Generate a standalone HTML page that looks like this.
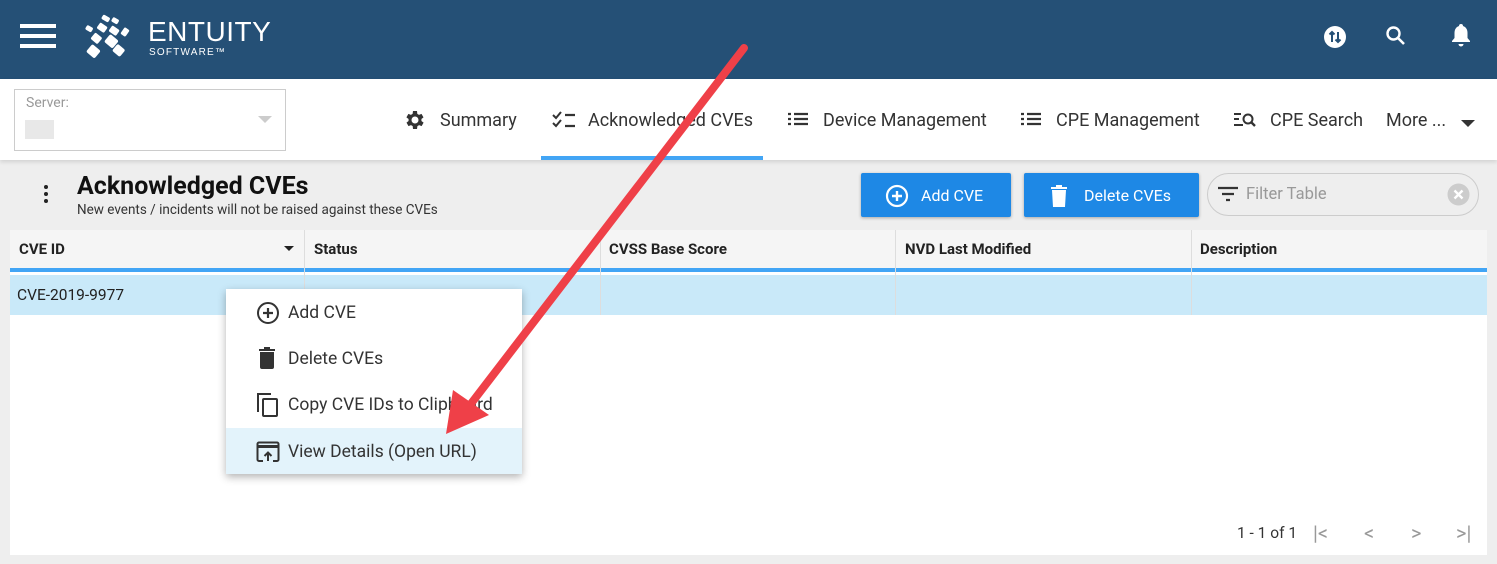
<!DOCTYPE html>
<html><head><style>
*{margin:0;padding:0;box-sizing:border-box}
body{width:1497px;height:564px;overflow:hidden;background:#eeeeee;font-family:"Roboto","Liberation Sans",sans-serif;position:relative;color:#222}
.abs{position:absolute}
.hdr{left:0;top:0;width:1497px;height:79px;background:#255076}
.nav{left:0;top:79px;width:1497px;height:81px;background:#fff;box-shadow:0 2px 4px rgba(0,0,0,.12)}
.tab{position:absolute;top:110px;font-size:18px;color:#333;white-space:nowrap}
.btn{position:absolute;top:173px;height:44px;background:#1e88e5;color:#fff;font-size:16px;border-radius:2px;box-shadow:0 1px 3px rgba(0,0,0,.3)}
.th{position:absolute;top:240px;font-size:15px;font-weight:bold;color:#222}
.mi{position:absolute;left:288px;font-size:17.5px;color:#333}
</style></head><body>
<div class="abs hdr"></div>
<div class="abs" style="left:20px;top:24px;width:36px;height:4px;background:#fff"></div>
<div class="abs" style="left:20px;top:34px;width:36px;height:4px;background:#fff"></div>
<div class="abs" style="left:20px;top:44px;width:36px;height:4px;background:#fff"></div>
<svg class="abs" style="left:82px;top:14px" width="56" height="46" viewBox="0 0 56 46" fill="#fff">
<rect x="20" y="2" width="8" height="5" rx="1.5" transform="rotate(30 24 4)"/>
<rect x="30" y="4" width="7" height="5" rx="1.5" transform="rotate(30 33 6)"/>
<rect x="4" y="12" width="7" height="5" rx="1.5" transform="rotate(30 7 14)"/>
<rect x="16" y="10" width="9" height="7" rx="1.5" transform="rotate(35 20 13)"/>
<rect x="28" y="13" width="9" height="7" rx="1.5" transform="rotate(35 32 16)"/>
<rect x="40" y="14" width="6" height="8" rx="1.5" transform="rotate(35 43 18)"/>
<rect x="10" y="20" width="9" height="8" rx="1.5" transform="rotate(40 14 24)"/>
<rect x="24" y="22" width="11" height="10" rx="2" transform="rotate(40 29 27)"/>
<rect x="6" y="32" width="11" height="10" rx="2" transform="rotate(40 11 37)"/>
<rect x="32" y="32" width="10" height="9" rx="2" transform="rotate(40 37 36)"/>
</svg>
<div class="abs" style="left:148px;top:16px;color:#fff;font-size:28px;letter-spacing:0.5px;font-family:'Liberation Sans',sans-serif">ENTUITY</div>
<div class="abs" style="left:149px;top:47px;color:#fff;font-size:10px;letter-spacing:1.2px;font-family:'Liberation Sans',sans-serif">SOFTWARE™</div>
<svg class="abs" style="left:1323px;top:25px" width="24" height="24" viewBox="0 0 24 24"><circle cx="12" cy="12" r="11" fill="#fff"/><path d="M9 17V7M6.5 9.5L9 7l2.5 2.5M15 7v10M12.5 14.5L15 17l2.5-2.5" stroke="#255076" stroke-width="2" fill="none"/></svg>
<svg class="abs" style="left:1384px;top:24px" width="24" height="24" viewBox="0 0 24 24"><circle cx="9.5" cy="9.5" r="6" stroke="#fff" stroke-width="2.4" fill="none"/><path d="M14 14l6 6" stroke="#fff" stroke-width="2.6"/></svg>
<svg class="abs" style="left:1449px;top:22px" width="24" height="26" viewBox="0 0 24 26"><path d="M12 2a2 2 0 0 1 2 2c3 1 4.5 3.5 4.5 7v5l2.5 3v1H3v-1l2.5-3v-5c0-3.5 1.5-6 4.5-7a2 2 0 0 1 2-2z" fill="#fff"/><path d="M9.5 22h5a2.5 2.5 0 0 1-5 0z" fill="#fff"/></svg>

<div class="abs nav"></div>
<div class="abs" style="left:14px;top:89px;width:272px;height:62px;border:1px solid #ccc;background:#fff"></div>
<div class="abs" style="left:26px;top:95px;font-size:14px;color:#999">Server:</div>
<div class="abs" style="left:25px;top:120px;width:29px;height:19px;background:#e8e8e8"></div>
<div class="abs" style="left:258px;top:116px;border-left:7px solid transparent;border-right:7px solid transparent;border-top:7px solid #ccc"></div>

<svg class="abs" style="left:403px;top:108px" width="24" height="24" viewBox="0 0 24 24"><path fill="#333" d="M19.4 13a7.5 7.5 0 0 0 0-2l2.1-1.6-2-3.5-2.5 1a7 7 0 0 0-1.7-1L15 3h-4l-.4 2.9a7 7 0 0 0-1.7 1l-2.5-1-2 3.5L6.6 11a7.5 7.5 0 0 0 0 2l-2.1 1.6 2 3.5 2.5-1a7 7 0 0 0 1.7 1L11 21h4l.4-2.9a7 7 0 0 0 1.7-1l2.5 1 2-3.5zM13 15.5a3.5 3.5 0 1 1 0-7 3.5 3.5 0 0 1 0 7z" transform="translate(-1 0)"/></svg>
<div class="tab" style="left:440px">Summary</div>
<svg class="abs" style="left:551px;top:110px" width="26" height="20" viewBox="0 0 26 20"><path d="M2 5l3 3 5-6M2 13l3 3 5-6" stroke="#333" stroke-width="2" fill="none"/><path d="M14 5h10M14 16h10" stroke="#333" stroke-width="2.2"/></svg>
<div class="tab" style="left:588px">Acknowledged CVEs</div>
<div class="abs" style="left:541px;top:156px;width:222px;height:4px;background:#42a5f5"></div>
<svg class="abs" style="left:788px;top:112px" width="20" height="16" viewBox="0 0 20 16"><path d="M0 2h3M6 2h14M0 7h3M6 7h14M0 12h3M6 12h14" stroke="#333" stroke-width="2.2"/></svg>
<div class="tab" style="left:823px">Device Management</div>
<svg class="abs" style="left:1021px;top:112px" width="20" height="16" viewBox="0 0 20 16"><path d="M0 2h3M6 2h14M0 7h3M6 7h14M0 12h3M6 12h14" stroke="#333" stroke-width="2.2"/></svg>
<div class="tab" style="left:1056px">CPE Management</div>
<svg class="abs" style="left:1233px;top:111px" width="24" height="18" viewBox="0 0 24 18"><path d="M1 3h7M1 8h5M1 14h9" stroke="#333" stroke-width="2"/><circle cx="15" cy="8" r="4.5" stroke="#333" stroke-width="2" fill="none"/><path d="M18 11l4 4" stroke="#333" stroke-width="2.4"/></svg>
<div class="tab" style="left:1270px">CPE Search</div>
<div class="tab" style="left:1386px">More ...</div>
<div class="abs" style="left:1461px;top:120px;border-left:7px solid transparent;border-right:7px solid transparent;border-top:7px solid #333"></div>

<div class="abs" style="left:44px;top:185px;width:4px;height:4px;border-radius:2px;background:#222;box-shadow:0 7px 0 #222,0 14px 0 #222"></div>
<div class="abs" style="left:77px;top:172px;font-size:25px;font-weight:bold;color:#111">Acknowledged CVEs</div>
<div class="abs" style="left:77px;top:202px;font-size:13.5px;color:#333">New events / incidents will not be raised against these CVEs</div>
<div class="btn" style="left:861px;width:150px"><svg class="abs" style="left:24px;top:11px" width="24" height="24" viewBox="0 0 24 24"><circle cx="12" cy="12" r="10" stroke="#fff" stroke-width="2.2" fill="none"/><path d="M12 7v10M7 12h10" stroke="#fff" stroke-width="2.4"/></svg><span class="abs" style="left:60px;top:13px">Add CVE</span></div>
<div class="btn" style="left:1024px;width:175px"><svg class="abs" style="left:26px;top:11px" width="18" height="24" viewBox="0 0 18 24"><path d="M1 3h16v2H1zM6 1h6v2H6zM2 6h14l-1 17H3z" fill="#fff"/></svg><span class="abs" style="left:60px;top:13px">Delete CVEs</span></div>
<div class="abs" style="left:1207px;top:173px;width:272px;height:43px;border:1px solid #ccc;border-radius:22px;background:#eee"></div>
<svg class="abs" style="left:1217px;top:186px" width="22" height="16" viewBox="0 0 22 16"><path d="M1 2h20M5 8h12M9 14h4" stroke="#333" stroke-width="2.2"/></svg>
<div class="abs" style="left:1246px;top:185px;font-size:16.5px;color:#999">Filter Table</div>
<svg class="abs" style="left:1447px;top:183px" width="23" height="23" viewBox="0 0 23 23"><circle cx="11.5" cy="11.5" r="11" fill="#ccc"/><path d="M7.5 7.5l8 8M15.5 7.5l-8 8" stroke="#fff" stroke-width="2.4"/></svg>

<div class="abs" style="left:10px;top:230px;width:1477px;height:325px;background:#fff"></div>
<div class="abs" style="left:10px;top:230px;width:1477px;height:38px;background:#f5f5f5"></div>
<div class="abs" style="left:10px;top:268px;width:1477px;height:4px;background:#42a5f5"></div>
<div class="abs" style="left:10px;top:275px;width:1477px;height:40px;background:#c9e9f9"></div>
<div class="abs" style="left:304px;top:230px;width:1px;height:85px;background:#ddd"></div>
<div class="abs" style="left:600px;top:230px;width:1px;height:85px;background:#ddd"></div>
<div class="abs" style="left:895px;top:230px;width:1px;height:85px;background:#ddd"></div>
<div class="abs" style="left:1191px;top:230px;width:1px;height:85px;background:#ddd"></div>
<div class="th" style="left:19px">CVE ID</div>
<div class="abs" style="left:284px;top:246px;border-left:5px solid transparent;border-right:5px solid transparent;border-top:5px solid #222"></div>
<div class="th" style="left:314px">Status</div>
<div class="th" style="left:609px">CVSS Base Score</div>
<div class="th" style="left:905px">NVD Last Modified</div>
<div class="th" style="left:1200px">Description</div>
<div class="abs" style="left:17px;top:286px;font-size:15.5px;color:#222">CVE-2019-9977</div>

<div class="abs" style="left:1237px;top:524px;font-size:15.5px;color:#333">1 - 1 of 1</div>
<div class="abs" style="left:1313px;top:521px;font-size:20px;color:#999">|&lt;</div>
<div class="abs" style="left:1364px;top:521px;font-size:20px;color:#999">&lt;</div>
<div class="abs" style="left:1411px;top:521px;font-size:20px;color:#999">&gt;</div>
<div class="abs" style="left:1456px;top:521px;font-size:20px;color:#999">&gt;|</div>

<div class="abs" style="left:226px;top:289px;width:296px;height:185px;background:#fff;box-shadow:0 3px 8px rgba(0,0,0,.3)"></div>
<div class="abs" style="left:226px;top:428px;width:296px;height:46px;background:#e3f3fb"></div>
<svg class="abs" style="left:256px;top:301px" width="24" height="24" viewBox="0 0 24 24"><circle cx="12" cy="12" r="10" stroke="#333" stroke-width="2" fill="none"/><path d="M12 7v10M7 12h10" stroke="#333" stroke-width="2.2"/></svg>
<div class="mi" style="top:303px">Add CVE</div>
<svg class="abs" style="left:258px;top:347px" width="18" height="22" viewBox="0 0 18 22"><path d="M1 2h16v2H1zM6 0h6v2H6zM2 5h14v15a2 2 0 0 1-2 2H4a2 2 0 0 1-2-2z" fill="#333"/></svg>
<div class="mi" style="top:349px">Delete CVEs</div>
<svg class="abs" style="left:256px;top:392px" width="24" height="26" viewBox="0 0 24 26"><path d="M2 20V2h13" stroke="#333" stroke-width="2" fill="none"/><rect x="7" y="7" width="14" height="17" rx="1" stroke="#333" stroke-width="2" fill="none"/></svg>
<div class="mi" style="top:395px">Copy CVE IDs to Clipboard</div>
<svg class="abs" style="left:256px;top:441px" width="24" height="22" viewBox="0 0 24 22"><path d="M7 20H3a1.5 1.5 0 0 1-1.5-1.5V3A1.5 1.5 0 0 1 3 1.5h18A1.5 1.5 0 0 1 22.5 3v15.5A1.5 1.5 0 0 1 21 20h-4" stroke="#333" stroke-width="2" fill="none"/><path d="M2 4h20v3H2z" fill="#333"/><path d="M12 20v-8M8.5 15l3.5-3.5 3.5 3.5" stroke="#333" stroke-width="2" fill="none"/></svg>
<div class="mi" style="top:442px">View Details (Open URL)</div>

<svg class="abs" style="left:0;top:0" width="1497" height="564" viewBox="0 0 1497 564">
<path d="M744 48L470 405" stroke="#ef4048" stroke-width="8" stroke-linecap="round" fill="none"/>
<path d="M446 434L453 390L489 415Z" fill="#ef4048"/>
</svg>
</body></html>
